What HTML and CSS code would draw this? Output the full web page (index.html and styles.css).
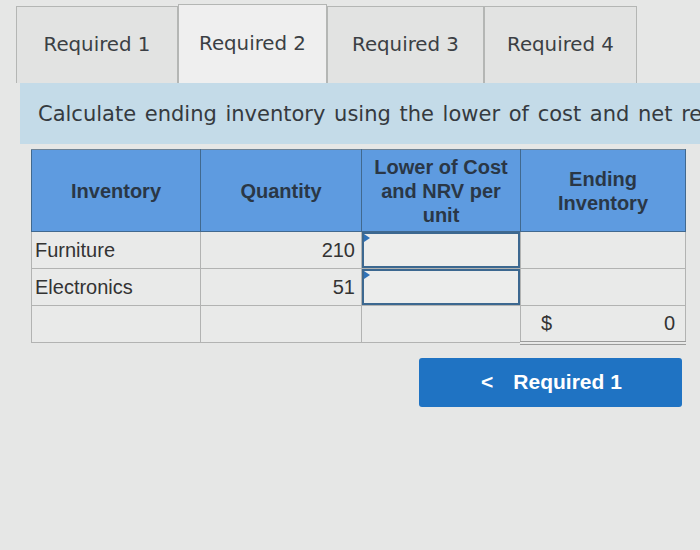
FILE: index.html
```html
<!DOCTYPE html>
<html>
<head>
<meta charset="utf-8">
<link rel="stylesheet" href="styles.css">
</head>
<body>
<div class="page">
  <div class="tabs">
    <div class="tab t1">Required 1</div>
    <div class="tab t2 active">Required 2</div>
    <div class="tab t3">Required 3</div>
    <div class="tab t4">Required 4</div>
  </div>
  <div class="instr">Calculate ending inventory using the lower of cost and net realizable value.</div>
  <table class="grid">
    <colgroup>
      <col class="c1"><col class="c2"><col class="c3"><col class="c4">
    </colgroup>
    <thead>
      <tr>
        <th>Inventory</th>
        <th>Quantity</th>
        <th>Lower of Cost<br>and NRV per<br>unit</th>
        <th>Ending<br>Inventory</th>
      </tr>
    </thead>
    <tbody>
      <tr>
        <td class="label">Furniture</td>
        <td class="num">210</td>
        <td class="inputcell"><div class="inp"><span class="flag"></span></div></td>
        <td></td>
      </tr>
      <tr>
        <td class="label">Electronics</td>
        <td class="num">51</td>
        <td class="inputcell"><div class="inp"><span class="flag"></span></div></td>
        <td></td>
      </tr>
      <tr class="total">
        <td></td>
        <td></td>
        <td></td>
        <td class="sum"><span class="dollar">$</span><span class="zero">0</span></td>
      </tr>
    </tbody>
  </table>
  <div class="btnrow">
    <button class="back"><span class="chev">&lt;</span><span>Required 1</span></button>
  </div>
</div>
</body>
</html>
```

FILE: styles.css
```css
html, body {
  margin: 0;
  padding: 0;
}
body {
  background: #e6e7e6;
  width: 700px;
  height: 550px;
  overflow: hidden;
}
.page {
  padding-top: 4px;
}
.tabs {
  display: flex;
  align-items: flex-end;
  padding-left: 16px;
  height: 79px;
}
.tab {
  box-sizing: border-box;
  height: 77px;
  border: 1px solid #b4b6b4;
  border-bottom: none;
  background: #e2e3e2;
  font-family: "DejaVu Sans", Verdana, sans-serif;
  font-size: 19.8px;
  color: #3b3f44;
  display: flex;
  align-items: center;
  justify-content: center;
  padding-bottom: 2px;
}
.tab.active {
  background: #efefef;
  height: 79px;
}
.t1 { width: 162px; }
.t2 { width: 149px; }
.t3 { width: 157px; }
.t4 { width: 153px; }
.instr {
  margin-left: 20px;
  height: 61px;
  background: #c4dbe8;
  font-family: "DejaVu Sans", Verdana, sans-serif;
  font-size: 21px;
  word-spacing: 2px;
  color: #353a3f;
  white-space: nowrap;
  overflow: hidden;
  box-sizing: border-box;
  padding: 19px 0 0 18px;
}
.grid {
  margin: 5px 0 0 31px;
  border-collapse: collapse;
  width: 654px;
  table-layout: fixed;
  font-family: "Liberation Sans", Arial, sans-serif;
  font-size: 20px;
  color: #333;
}
.c1 { width: 169px; }
.c2 { width: 161px; }
.c3 { width: 159px; }
.c4 { width: 165px; }
.grid th {
  background: #5e9be0;
  color: #2a3746;
  font-weight: bold;
  height: 82px;
  box-sizing: border-box;
  line-height: 24px;
  border: 1px solid #41698f;
  border-top: 1px solid #6f8396;
  padding: 0;
  text-align: center;
  vertical-align: middle;
}
.grid td {
  height: 37px;
  box-sizing: border-box;
  border: 1px solid #b2b3b2;
  background: #e9eae9;
  padding: 0 4px;
  vertical-align: middle;
}
.grid td.label {
  padding-left: 3px;
}
.grid td.num {
  text-align: right;
  padding-right: 6px;
}
.grid td.inputcell {
  padding: 0;
}
.inp {
  position: relative;
  box-sizing: border-box;
  height: 36px;
  border: 2px solid #3c6890;
  background: #ecedec;
}
.flag {
  position: absolute;
  left: 0;
  top: 0;
  width: 0;
  height: 0;
  border-top: 4px solid transparent;
  border-bottom: 4px solid transparent;
  border-left: 6px solid #2f72b8;
}
.grid td.sum {
  border-bottom: 4px double #9a9b9a;
  padding: 0 10px 0 20px;
}
.dollar {
  float: left;
}
.zero {
  float: right;
}
.btnrow {
  padding: 13px 0 0 419px;
}
.back {
  width: 263px;
  height: 49px;
  border: none;
  border-radius: 3px;
  background: #1f73c3;
  color: #fff;
  font-family: "Liberation Sans", Arial, sans-serif;
  font-weight: bold;
  font-size: 21px;
  display: flex;
  align-items: center;
  justify-content: center;
  gap: 20px;
  padding: 0 0 0 2px;
}
.chev {
  font-size: 21px;
}
```
